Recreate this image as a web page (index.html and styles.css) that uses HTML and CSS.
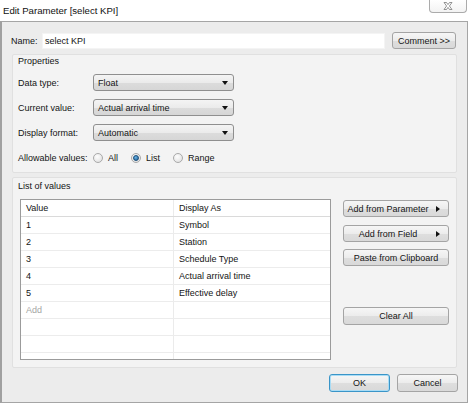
FILE: index.html
```html
<!DOCTYPE html>
<html>
<head>
<meta charset="utf-8">
<link rel="stylesheet" href="styles.css">
</head>
<body>
<div class="titlebar">
  <span class="title">Edit Parameter [select KPI]</span>
  <div class="close">
    <svg width="10" height="8" viewBox="0 0 10 8"><path d="M1 .5h2.5L5 2.6 6.5.5H9L6.4 4 9 7.5H6.5L5 5.4 3.5 7.5H1L3.6 4z" fill="#fff" stroke="#7a7a7a" stroke-width=".8"/></svg>
  </div>
</div>
<div class="window">
  <div class="name-row">
    <span class="name-label">Name:</span>
    <div class="name-input">select KPI</div>
    <div class="btn comment">Comment &gt;&gt;</div>
  </div>

  <div class="group props">
    <div class="group-title">Properties</div>
    <div class="prop-row">
      <span class="prop-label">Data type:</span>
      <div class="select"><span>Float</span><i class="caret"></i></div>
    </div>
    <div class="prop-row">
      <span class="prop-label">Current value:</span>
      <div class="select"><span>Actual arrival time</span><i class="caret"></i></div>
    </div>
    <div class="prop-row">
      <span class="prop-label">Display format:</span>
      <div class="select"><span>Automatic</span><i class="caret"></i></div>
    </div>
    <div class="prop-row radio-row">
      <span class="prop-label">Allowable values:</span>
      <span class="opt"><i class="radio"></i>All</span>
      <span class="opt"><i class="radio checked"></i>List</span>
      <span class="opt"><i class="radio"></i>Range</span>
    </div>
  </div>

  <div class="group list">
    <div class="group-title">List of values</div>
    <div class="list-body">
      <div class="table">
        <div class="tr head"><div class="td c1">Value</div><div class="td c2">Display As</div></div>
        <div class="tr"><div class="td c1">1</div><div class="td c2">Symbol</div></div>
        <div class="tr"><div class="td c1">2</div><div class="td c2">Station</div></div>
        <div class="tr"><div class="td c1">3</div><div class="td c2">Schedule Type</div></div>
        <div class="tr"><div class="td c1">4</div><div class="td c2">Actual arrival time</div></div>
        <div class="tr"><div class="td c1">5</div><div class="td c2">Effective delay</div></div>
        <div class="tr"><div class="td c1 add">Add</div><div class="td c2"></div></div>
        <div class="tr"><div class="td c1"></div><div class="td c2"></div></div>
        <div class="tr"><div class="td c1"></div><div class="td c2"></div></div>
        <div class="tr"><div class="td c1"></div><div class="td c2"></div></div>
      </div>
      <div class="side">
        <div class="btn side-btn"><span class="lbl">Add from Parameter</span><i class="arrow"></i></div>
        <div class="btn side-btn"><span class="lbl">Add from Field</span><i class="arrow"></i></div>
        <div class="btn side-btn"><span class="lbl center">Paste from Clipboard</span></div>
        <div class="btn side-btn clear"><span class="lbl center">Clear All</span></div>
      </div>
    </div>
  </div>

  <div class="footer">
    <div class="btn foot-btn ok">OK</div>
    <div class="btn foot-btn">Cancel</div>
  </div>
</div>
</body>
</html>
```
FILE: styles.css
```css
* { box-sizing: border-box; }
html, body { margin: 0; padding: 0; background: #fff; }
body {
  font-family: "Liberation Sans", Arial, sans-serif;
  font-size: 9px;
  color: #141414;
  width: 474px;
  height: 407px;
  overflow: hidden;
}

.titlebar {
  display: flex;
  align-items: flex-start;
  height: 21px;
  background: #fff;
}
.title {
  font-size: 9.6px;
  line-height: 11px;
  padding: 5px 0 0 3px;
  color: #111;
}
.close {
  margin-left: auto;
  margin-right: 7px;
  width: 38px;
  height: 13px;
  border: 1px solid #ababab;
  border-top: none;
  border-radius: 0 0 4px 4px;
  background: linear-gradient(#fff, #f3f3f3);
  display: flex;
  align-items: center;
  justify-content: center;
}

.window {
  width: 468px;
  height: 382px;
  background: #ececec;
  border: 1px solid #a5a5a5;
  border-left: 2px solid #a0a0a0;
  padding-top: 10px;
}

.name-row {
  display: flex;
  align-items: center;
  height: 17px;
  padding-left: 9px;
}
.name-label { width: 31px; }
.name-input {
  width: 343px;
  height: 16px;
  background: #fff;
  border: 1px solid #f4f4f4;
  padding-left: 2px;
  line-height: 14px;
}

.btn {
  border: 1px solid #a4a4a4;
  border-radius: 3px;
  background: linear-gradient(#f6f6f6 0%, #ececec 50%, #dedede 51%, #d9d9d9 100%);
  display: flex;
  align-items: center;
  justify-content: center;
  color: #141414;
}
.comment {
  margin-left: 7px;
  width: 64px;
  height: 17px;
}

.group {
  margin-left: 10px;
  width: 445px;
  background: #f3f3f3;
  border: 1px solid #e0e0e0;
  border-radius: 2px;
}
.group-title {
  line-height: 12px;
  padding-left: 5px;
}
.props {
  margin-top: 5px;
  height: 119px;
}
.props .group-title { margin-bottom: 7px; }
.prop-row {
  display: flex;
  align-items: center;
  height: 17px;
  padding-left: 5px;
  margin-bottom: 8px;
}
.prop-label { width: 75px; }
.select {
  width: 141px;
  height: 17px;
  border: 1px solid #8f8f8f;
  border-radius: 3px;
  background: linear-gradient(#f4f4f4 0%, #ebebeb 50%, #dcdcdc 51%, #d6d6d6 100%);
  display: flex;
  align-items: center;
  padding-left: 4px;
}
.caret {
  margin-left: auto;
  margin-right: 5px;
  width: 0;
  height: 0;
  border-left: 3.5px solid transparent;
  border-right: 3.5px solid transparent;
  border-top: 4px solid #111;
}
.radio-row {
  height: 16px;
  margin-top: 9px;
  margin-bottom: 0;
}
.opt {
  display: flex;
  align-items: center;
  margin-right: 13px;
}
.radio {
  width: 10px;
  height: 10px;
  border-radius: 50%;
  border: 1px solid #a9a9a9;
  background: radial-gradient(circle at 40% 35%, #fdfdfd, #dcdcdc);
  margin-right: 5px;
  display: flex;
  align-items: center;
  justify-content: center;
}
.radio.checked::after {
  content: "";
  width: 4px;
  height: 4px;
  border-radius: 50%;
  background: radial-gradient(circle at 40% 35%, #6ab3e6, #1c5d93);
  border: 0.5px solid #174d7a;
}

.list {
  margin-top: 4px;
  height: 191px;
  padding-top: 2px;
}
.list .group-title { margin-bottom: 7px; }
.list-body {
  display: flex;
  padding-left: 7px;
}
.table {
  width: 311px;
  height: 161px;
  border: 1px solid #9b9b9b;
  background: #fff;
  overflow: hidden;
}
.tr {
  display: flex;
  height: 17px;
  border-bottom: 1px solid #ececec;
}
.tr.head {
  border-bottom-color: #dadada;
}
.td {
  line-height: 16px;
  padding-left: 5px;
  white-space: nowrap;
}
.c1 {
  width: 153px;
  border-right: 1px solid #ebebeb;
}
.c2 { flex: 1; }
.add { color: #a5a5a5; }

.side {
  display: flex;
  flex-direction: column;
  margin-left: 12px;
  padding-top: 1px;
}
.side-btn {
  width: 106px;
  height: 17px;
  margin-bottom: 7px;
  padding-right: 8px;
}
.side-btn:first-child { margin-bottom: 8px; }
.side-btn .lbl {
  flex: 1;
  text-align: center;
  white-space: nowrap;
}
.side-btn .lbl.center { padding-left: 8px; }
.arrow {
  margin-left: 4px;
  width: 0;
  height: 0;
  border-top: 3px solid transparent;
  border-bottom: 3px solid transparent;
  border-left: 4px solid #111;
}
.clear {
  margin-top: 34px;
  height: 18px;
}

.footer {
  display: flex;
  justify-content: flex-end;
  margin-top: 6px;
  padding-right: 9px;
}
.foot-btn {
  width: 61px;
  height: 18px;
  margin-left: 7px;
}
.ok {
  border-color: #3a95c8;
  box-shadow: inset 0 0 0 1px #a9dcf5;
}
```
